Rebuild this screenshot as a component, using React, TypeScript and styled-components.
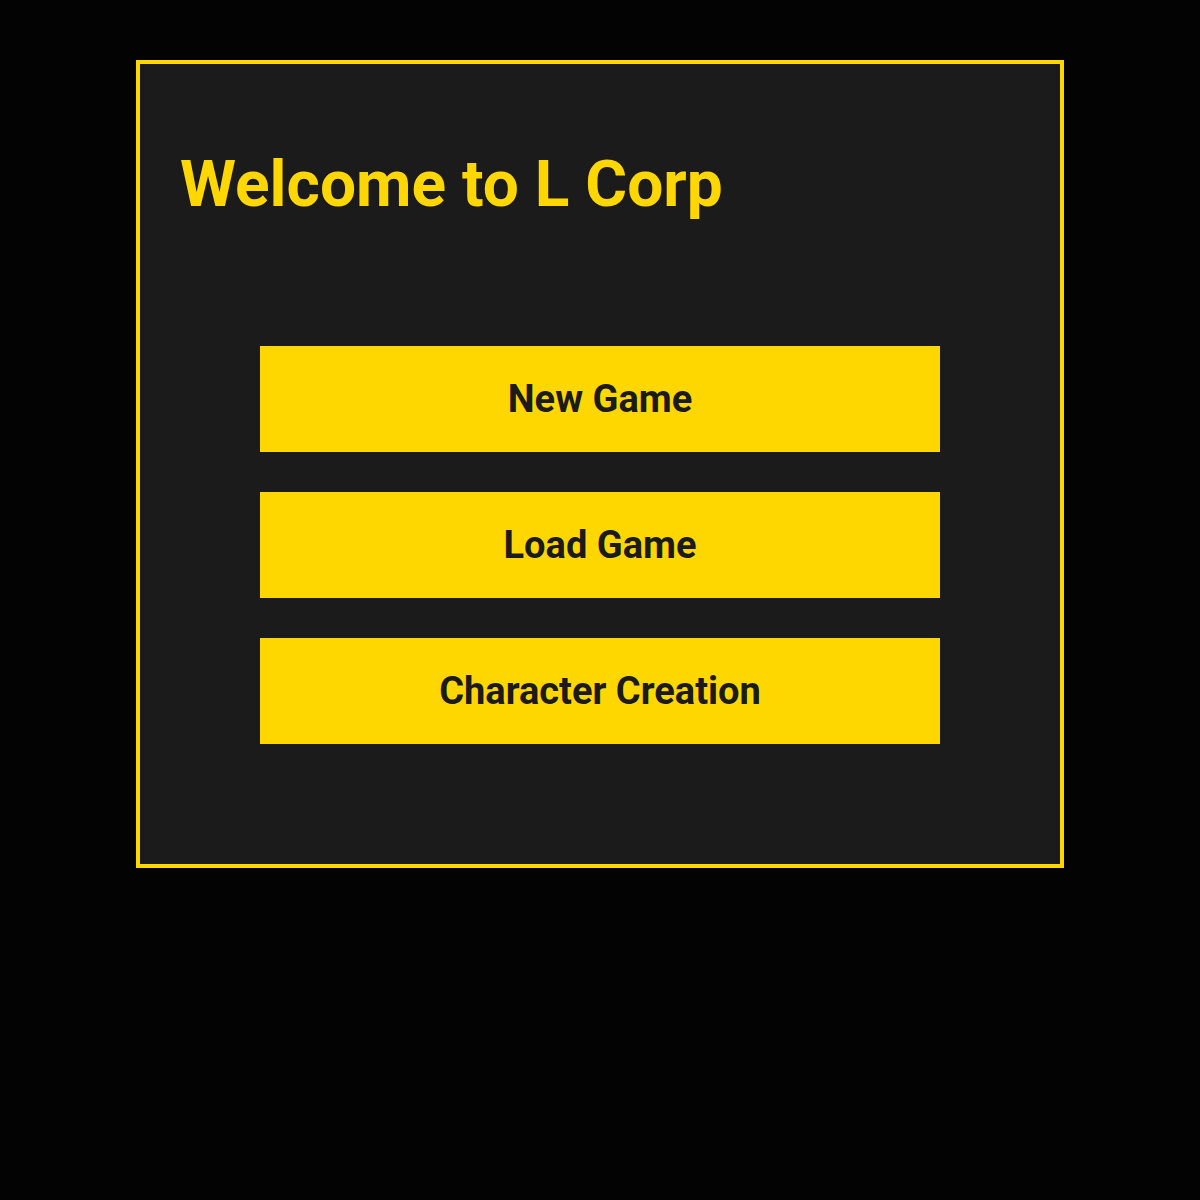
import React from "react";
import styled, { createGlobalStyle } from "styled-components";

const Global = createGlobalStyle`
  html, body {
    margin: 0;
    padding: 0;
    background: #030303;
    font-family: Roboto, "Liberation Sans", sans-serif;
  }
  * { box-sizing: border-box; }
`;

const Page = styled.div`
  width: 1200px;
  min-height: 1200px;
  padding-top: 60px;
  display: flex;
  justify-content: center;
  align-items: flex-start;
`;

const Panel = styled.div`
  width: 928px;
  height: 808px;
  background: #1b1b1b;
  border: 4px solid #ffd700;
  padding: 40px;
  display: flex;
  flex-direction: column;
`;

const Title = styled.h1`
  margin: 43px 0 0 0;
  font-size: 64px;
  line-height: 75px;
  font-weight: 700;
  color: #ffd700;
`;

const Menu = styled.div`
  margin-top: 124px;
  display: flex;
  flex-direction: column;
  align-items: center;
  gap: 40px;
`;

const MenuButton = styled.button`
  width: 680px;
  height: 106px;
  border: none;
  background: #ffd700;
  color: #1b1b1b;
  font-family: Roboto, "Liberation Sans", sans-serif;
  font-size: 38px;
  font-weight: 700;
  cursor: pointer;
  display: flex;
  align-items: center;
  justify-content: center;
`;

export default function App() {
  return (
    <>
      <Global />
      <Page>
        <Panel>
          <Title>Welcome to L Corp</Title>
          <Menu>
            <MenuButton>New Game</MenuButton>
            <MenuButton>Load Game</MenuButton>
            <MenuButton>Character Creation</MenuButton>
          </Menu>
        </Panel>
      </Page>
    </>
  );
}
